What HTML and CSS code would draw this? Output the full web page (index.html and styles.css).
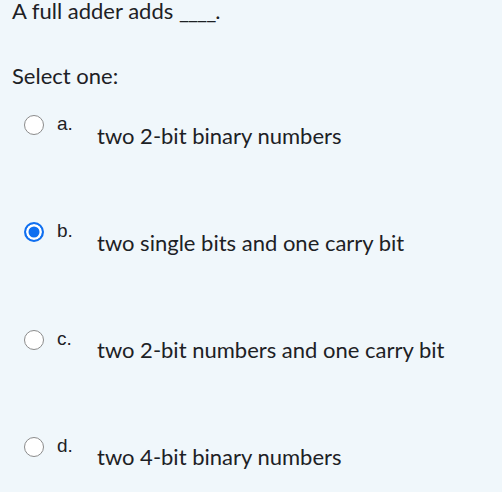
FILE: index.html
```html
<!DOCTYPE html>
<html>
<head>
<meta charset="utf-8">
<link rel="stylesheet" href="styles.css">
</head>
<body>
<div class="que">
  <div class="qtext">A full adder adds <span class="blank">____</span>.</div>
  <div class="prompt">Select one:</div>
  <div class="answer">
    <div class="opt">
      <span class="radio"></span>
      <span class="num">a.</span>
      <span class="text">two 2-bit binary numbers</span>
    </div>
    <div class="opt">
      <span class="radio checked"></span>
      <span class="num">b.</span>
      <span class="text">two single bits and one carry bit</span>
    </div>
    <div class="opt">
      <span class="radio"></span>
      <span class="num">c.</span>
      <span class="text">two 2-bit numbers and one carry bit</span>
    </div>
    <div class="opt">
      <span class="radio"></span>
      <span class="num">d.</span>
      <span class="text">two 4-bit binary numbers</span>
    </div>
  </div>
</div>
</body>
</html>
```
FILE: styles.css
```css
html, body {
  margin: 0;
  padding: 0;
  background: #f0f7fb;
  min-height: 100%;
}
body {
  font-family: Lato, "Open Sans", sans-serif;
  font-size: 22px;
  color: #1d2125;
}
.que {
  padding: 0 12px;
}
.qtext {
  line-height: 22px;
  padding-top: 0;
}
.blank {
  letter-spacing: -1px;
}
.prompt {
  margin-top: 40.5px;
  line-height: 26px;
}
.answer {
  display: flex;
  flex-direction: column;
  gap: 71.8px;
  margin-top: 24.5px;
}
.opt {
  display: flex;
  align-items: flex-start;
}
.radio {
  box-sizing: border-box;
  width: 20px;
  height: 20px;
  border-radius: 50%;
  border: 1.5px solid #8b8b8b;
  background: #fff;
  margin: 2px 0 0 12px;
  flex: none;
}
.radio.checked {
  border: 2px solid #0f6ff0;
  background: #0f6ff0;
  box-shadow: inset 0 0 0 2.5px #fff;
}
.num {
  font-family: "Liberation Sans", Arial, sans-serif;
  font-size: 19px;
  line-height: 22px;
  margin-left: 13px;
  width: 40px;
  flex: none;
}
.text {
  margin-top: 9.5px;
  line-height: 26px;
}
```
